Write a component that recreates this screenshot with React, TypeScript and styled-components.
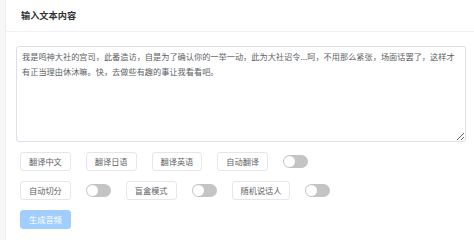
import React, { useState } from "react";
import styled, { createGlobalStyle } from "styled-components";

const GlobalStyle = createGlobalStyle`
  html, body {
    margin: 0;
    padding: 0;
    background: #f7f7f8;
    font-family: "Noto Sans CJK SC", "Liberation Sans", sans-serif;
  }
`;

const Page = styled.div`
  padding-left: 5px;
  height: 100vh;
  overflow: hidden;
`;

const Card = styled.section`
  background: #fff;
  border-left: 1px solid #ececee;
  height: 100%;
`;

const CardHeader = styled.header`
  height: 32px;
  box-sizing: border-box;
  padding: 0 0 0 15px;
  display: flex;
  align-items: center;
  border-bottom: 1px solid #f1f1f3;
  h2 {
    margin: 0;
    font-size: 9.2px;
    font-weight: 700;
    color: #303133;
    line-height: 1;
  }
`;

const CardBody = styled.div`
  padding: 14px 0 0 10px;
  display: flex;
  flex-direction: column;
  gap: 10px;
`;

const TextArea = styled.textarea`
  display: block;
  width: 450px;
  height: 96px;
  box-sizing: border-box;
  margin: 0;
  padding: 2px 5px;
  border: 1px solid #dcdfe6;
  border-radius: 3px;
  resize: vertical;
  font-family: "Noto Sans CJK SC", "Liberation Sans", sans-serif;
  font-size: 8.2px;
  line-height: 15px;
  color: #606266;
  outline: none;
`;

const Row = styled.div`
  display: flex;
  align-items: center;
  gap: 15px;
  padding-left: 4px;
`;

const Button = styled.button<{ $primary?: boolean }>`
  height: 19px;
  box-sizing: border-box;
  padding: 0 8px;
  border: 1px solid ${(p) => (p.$primary ? "#a0cfff" : "#e4e6eb")};
  border-radius: 3px;
  background: ${(p) => (p.$primary ? "#a0cfff" : "#fff")};
  color: ${(p) => (p.$primary ? "#fff" : "#606266")};
  font-family: "Noto Sans CJK SC", "Liberation Sans", sans-serif;
  font-size: 8.2px;
  line-height: 1;
  cursor: ${(p) => (p.$primary ? "not-allowed" : "pointer")};
  white-space: nowrap;
`;

const SwitchTrack = styled.span<{ $on: boolean }>`
  position: relative;
  display: inline-block;
  width: 25px;
  height: 13px;
  border-radius: 7px;
  background: ${(p) => (p.$on ? "#409eff" : "#c4c4c6")};
  cursor: pointer;
  flex: none;
`;

const SwitchKnob = styled.span<{ $on: boolean }>`
  position: absolute;
  top: 1px;
  left: ${(p) => (p.$on ? "13px" : "1px")};
  width: 11px;
  height: 11px;
  border-radius: 50%;
  background: #fff;
  transition: left 0.2s;
`;

function Switch() {
  const [on, setOn] = useState(false);
  return (
    <SwitchTrack $on={on} onClick={() => setOn(!on)}>
      <SwitchKnob $on={on} />
    </SwitchTrack>
  );
}

const defaultText =
  "我是鸣神大社的宫司，此番造访，自是为了确认你的一举一动，此为大社诏令...呵，不用那么紧张，场面话罢了，这样才有正当理由休沐嘛。快，去做些有趣的事让我看看吧。";

export default function App() {
  const [text, setText] = useState(defaultText);
  return (
    <>
      <GlobalStyle />
      <Page>
        <Card>
          <CardHeader>
            <h2>输入文本内容</h2>
          </CardHeader>
          <CardBody>
            <TextArea value={text} onChange={(e) => setText(e.target.value)} />
            <Row>
              <Button>翻译中文</Button>
              <Button>翻译日语</Button>
              <Button>翻译英语</Button>
              <Button>自动翻译</Button>
              <Switch />
            </Row>
            <Row>
              <Button>自动切分</Button>
              <Switch />
              <Button>盲盒模式</Button>
              <Switch />
              <Button>随机说话人</Button>
              <Switch />
            </Row>
            <Row>
              <Button $primary disabled>
                生成音频
              </Button>
            </Row>
          </CardBody>
        </Card>
      </Page>
    </>
  );
}
